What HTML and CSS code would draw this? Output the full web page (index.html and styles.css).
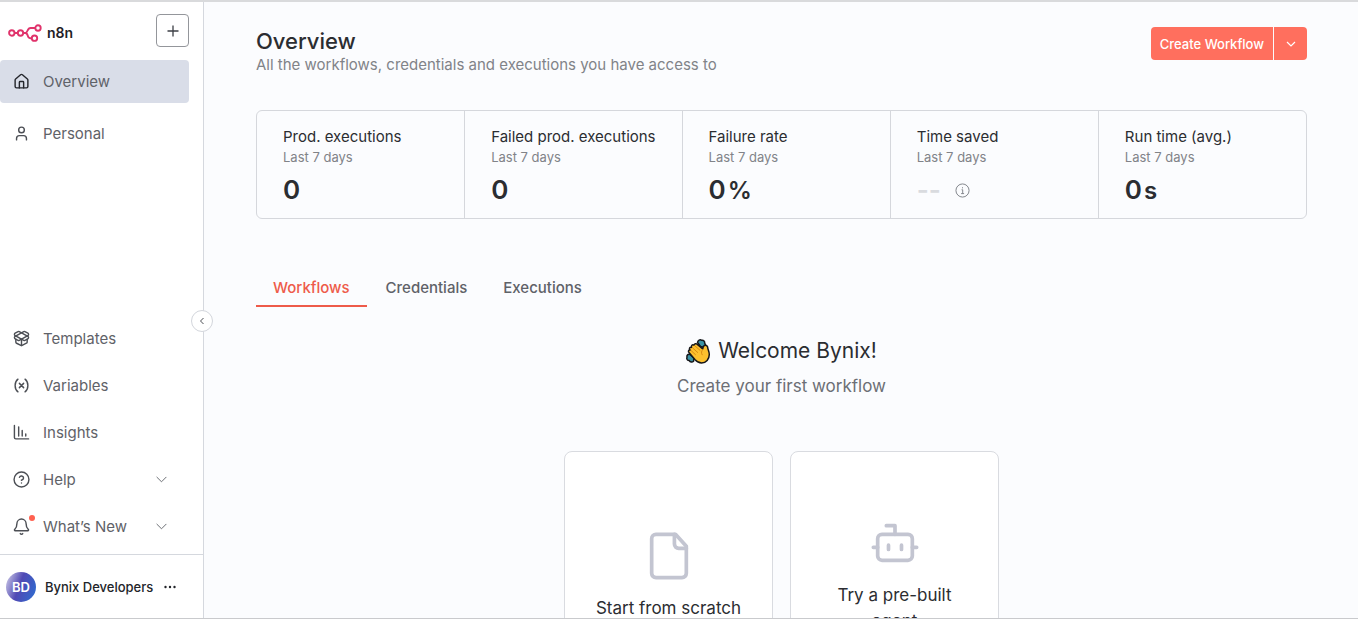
FILE: index.html
```html
<!DOCTYPE html>
<html lang="en">
<head>
  <meta charset="UTF-8">
  <meta name="viewport" content="width=device-width, initial-scale=1.0">
  <title>Overview - n8n</title>
  <link rel="stylesheet" href="styles.css">
</head>
<body>
  <div class="app">
    <aside class="sidebar">
      <div class="sidebar-header">
        <a class="logo" href="#">
          <svg class="logo-mark" viewBox="0 0 34 18" fill="none" stroke="#e0336b" stroke-width="1.9">
            <circle cx="3.800" cy="9" r="2.700"/>
            <circle cx="12.500" cy="9" r="2.700"/>
            <circle cx="30" cy="4" r="2.700"/>
            <circle cx="26.500" cy="14.200" r="2.700"/>
            <path d="M6.500 9h3.300M15.200 9h2c3 0 1.500-5 5.500-5h4.600M17.200 9c3.500 0 1.500 5.200 5 5.200h1.600"/>
          </svg>
          <span>n8n</span>
        </a>
        <button class="add-button" type="button" aria-label="Add">
          <svg class="icon-plus" viewBox="0 0 14 14" fill="none" stroke="currentColor" stroke-width="1.3"><path d="M7 1.500v11M1.500 7h11"/></svg>
        </button>
      </div>

      <nav class="menu">
        <a class="menu-item active" href="#">
          <svg class="icon" viewBox="0 0 24 24"><path d="M15 21v-8a1 1 0 0 0-1-1h-4a1 1 0 0 0-1 1v8"/><path d="M3 10a2 2 0 0 1 .709-1.528l7-5.999a2 2 0 0 1 2.582 0l7 5.999A2 2 0 0 1 21 10v9a2 2 0 0 1-2 2H5a2 2 0 0 1-2-2z"/></svg>
          <span>Overview</span>
        </a>
        <a class="menu-item" href="#">
          <svg class="icon" viewBox="0 0 24 24"><circle cx="12" cy="7" r="4"/><path d="M19 21v-2a4 4 0 0 0-4-4H9a4 4 0 0 0-4 4v2"/></svg>
          <span>Personal</span>
        </a>
      </nav>

      <nav class="menu menu-bottom">
        <a class="menu-item" href="#">
          <svg class="icon" viewBox="0 0 24 24"><path d="M12 22v-9"/><path d="M15.170 2.210a1.670 1.670 0 0 1 1.630 0L21 4.570a1.930 1.930 0 0 1 0 3.360L8.820 14.790a1.655 1.655 0 0 1-1.640 0L3 12.430a1.930 1.930 0 0 1 0-3.360z"/><path d="M20 13v3.870a2.060 2.060 0 0 1-1.110 1.830l-6 3.080a1.930 1.930 0 0 1-1.780 0l-6-3.080A2.060 2.060 0 0 1 4 16.870V13"/><path d="M21 12.430a1.930 1.930 0 0 0 0-3.360L8.830 2.200a1.640 1.640 0 0 0-1.630 0L3 4.570a1.930 1.930 0 0 0 0 3.360l12.180 6.860a1.636 1.636 0 0 0 1.630 0z"/></svg>
          <span>Templates</span>
        </a>
        <a class="menu-item" href="#">
          <svg class="icon" viewBox="0 0 24 24"><path d="M7 21s-4-3-4-9 4-9 4-9"/><path d="M17 3s4 3 4 9-4 9-4 9"/><path d="m15 9-6 6M9 9l6 6"/></svg>
          <span>Variables</span>
        </a>
        <a class="menu-item" href="#">
          <svg class="icon" viewBox="0 0 24 24"><path d="M2 2v17a2 2 0 0 0 2 2H22"/><path d="M8 17V4M13 17V9M18 17v-3"/></svg>
          <span>Insights</span>
        </a>
        <a class="menu-item" href="#">
          <svg class="icon" viewBox="0 0 24 24"><circle cx="12" cy="12" r="10.500"/><path d="M9.090 9a3 3 0 0 1 5.830 1c0 2-3 3-3 3"/><path d="M12 17h.01"/></svg>
          <span>Help</span>
          <svg class="chevron" viewBox="0 0 12 12"><path d="m1 3.500 5 5 5-5"/></svg>
        </a>
        <a class="menu-item" href="#">
          <span class="icon-wrap">
            <svg class="icon" viewBox="0 0 24 24"><path d="M10.268 22a2 2 0 0 0 3.464 0"/><path d="M2.262 16.326A1 1 0 0 0 3 18h18a1 1 0 0 0 .74-1.673C20.410 14.956 18.500 13.499 18.500 8A6.500 6.500 0 0 0 5.500 8c0 5.499-1.911 6.956-3.238 8.326"/></svg>
            <span class="dot"></span>
          </span>
          <span>What’s New</span>
          <svg class="chevron" viewBox="0 0 12 12"><path d="m1 3.500 5 5 5-5"/></svg>
        </a>
      </nav>

      <div class="user">
        <span class="avatar">BD</span>
        <span class="user-name">Bynix Developers</span>
        <button class="user-menu" type="button" aria-label="User menu">
          <svg viewBox="0 0 14 4" fill="currentColor"><circle cx="2.500" cy="2" r="1.200"/><circle cx="7" cy="2" r="1.200"/><circle cx="11.500" cy="2" r="1.200"/></svg>
        </button>
      </div>

      <button class="collapse" type="button" aria-label="Collapse sidebar">
        <svg viewBox="0 0 8 8" fill="none" stroke="currentColor"><path d="M5.500 1 2.500 4l3 3"/></svg>
      </button>
    </aside>

    <main class="content">
      <header class="page-header">
        <div>
          <h1>Overview</h1>
          <p class="subtitle">All the workflows, credentials and executions you have access to</p>
        </div>
        <div class="button-group">
          <button class="create" type="button">Create Workflow</button>
          <button class="create-more" type="button" aria-label="More create options">
            <svg viewBox="0 0 12 12" fill="none" stroke="currentColor" stroke-width="1.200"><path d="m2 4 4 4 4-4"/></svg>
          </button>
        </div>
      </header>

      <ul class="stats">
        <li>
          <strong>Prod. executions</strong>
          <small>Last 7 days</small>
          <div class="value">0</div>
        </li>
        <li>
          <strong>Failed prod. executions</strong>
          <small>Last 7 days</small>
          <div class="value">0</div>
        </li>
        <li>
          <strong>Failure rate</strong>
          <small>Last 7 days</small>
          <div class="value">0<em>%</em></div>
        </li>
        <li>
          <strong>Time saved</strong>
          <small>Last 7 days</small>
          <div class="value empty">
            <span>--</span>
            <svg class="info" viewBox="0 0 16 16" fill="none" stroke="currentColor"><circle cx="8" cy="8" r="7"/><path d="M7 7.200h1.200v4M6.500 11.300h3.200M8 4.500v1.200"/></svg>
          </div>
        </li>
        <li>
          <strong>Run time (avg.)</strong>
          <small>Last 7 days</small>
          <div class="value">0<em>s</em></div>
        </li>
      </ul>

      <nav class="tabs">
        <a class="tab active" href="#">Workflows</a>
        <a class="tab" href="#">Credentials</a>
        <a class="tab" href="#">Executions</a>
      </nav>

      <section class="welcome">
        <h2>
          <svg class="wave" viewBox="0 0 24 25" stroke="#15161a" stroke-linecap="round" stroke-linejoin="round">
            <path fill="#3b93a5" stroke-width="1.500" d="M11.500 3.500c.3-2.300 2.500-3.300 4.200-2.200 1.900-.4 3.300 1.100 3 2.900 1.200 1.200.9 2.800-.2 4.300l-4-1zM4 15.500c-2-.8-3.600.8-3 2.600-.8 1.900.6 3.600 2.300 3.500.8 1.700 3 2 4.200.700l.500-3.300z"/>
            <path fill="#fcc02e" stroke-width="1.500" d="M3.200 13.800c-1.500-1.300-.5-3.100.9-2.700-1.500-1.600-.2-3.500 1.500-2.700-.9-1.800.8-3.300 2.400-2.300.3-1.600 2.200-1.900 3.300-.8l5.400 4.500c.2-1.600.8-3.300 2.400-3.500 1.700-.2 2.600 1.100 2.700 2.800.1 1.500 1.500 3.200 1.500 6.500 0 4.500-3.200 8.400-7.700 8.400-2.900 0-4.800-1.300-6.500-3.200z"/>
            <path fill="none" stroke="#d98a12" d="m5 11.500 4.500 4.200M6.700 9l5 4.500M9 7l5 4.300M17 10.500c-1.800 1.500-2 3.500-.8 5.300"/>
          </svg>
          <span>Welcome Bynix!</span>
        </h2>
        <p>Create your first workflow</p>
        <div class="cards">
          <a class="card" href="#">
            <svg class="card-icon" viewBox="0 0 24 24"><path d="M15 2H6a2 2 0 0 0-2 2v16a2 2 0 0 0 2 2h12a2 2 0 0 0 2-2V7.500Z"/><path d="M14.500 2v4.500a2 2 0 0 0 2 2H20"/></svg>
            <span>Start from scratch</span>
          </a>
          <a class="card" href="#">
            <svg class="card-icon" viewBox="0 0 24 24"><path d="M12 8V4H8"/><rect width="16" height="12" x="4" y="8" rx="2"/><path d="M2 14h2M20 14h2M15 13v2M9 13v2"/></svg>
            <span>Try a pre-built agent</span>
          </a>
        </div>
      </section>
    </main>
  </div>
</body>
</html>
```
FILE: styles.css
```css
* {
  box-sizing: border-box;
}

body {
  margin: 0;
  font-family: Inter, "Liberation Sans", sans-serif;
  font-size: 15px;
  color: #2b2d31;
  background: #fbfcfe;
}

a {
  color: inherit;
  text-decoration: none;
}

button {
  font: inherit;
  padding: 0;
  cursor: pointer;
}

h1, h2, p, ul {
  margin: 0;
  padding: 0;
}

.app {
  display: flex;
  height: 100vh;
  border-top: 2px solid #d9dadc;
  border-bottom: 1px solid #c9cacd;
}

/* Sidebar */
.sidebar {
  position: relative;
  display: flex;
  flex-direction: column;
  flex: 0 0 204px;
  background: #fff;
  border-right: 1px solid #d5d8de;
}

.sidebar-header {
  display: flex;
  align-items: center;
  justify-content: space-between;
  padding: 12px 14px 13px 8px;
}

.logo {
  display: flex;
  align-items: center;
  gap: 5px;
  margin-top: 4px;
  font-size: 14px;
  font-weight: 600;
  color: #1f2126;
}

.logo-mark {
  width: 34px;
  height: 18px;
}

.add-button {
  display: flex;
  align-items: center;
  justify-content: center;
  width: 33px;
  height: 33px;
  color: #3c3f45;
  background: #fff;
  border: 1px solid #94969b;
  border-radius: 4px;
}

.icon-plus {
  width: 14px;
  height: 14px;
}

.menu {
  display: flex;
  flex-direction: column;
  gap: 9px;
  padding-right: 14px;
}

.menu-bottom {
  gap: 4px;
  margin-top: auto;
  padding-bottom: 6px;
}

.menu-item {
  display: flex;
  align-items: center;
  height: 43px;
  gap: 13px;
  padding: 0 22px 0 13px;
  border-radius: 4px;
  font-size: 15px;
  color: #5f6268;
}

.menu-item.active {
  background: #d9dde8;
}

.menu-item.active .icon {
  color: #24262c;
}

.icon,
.chevron,
.card-icon {
  fill: none;
  stroke: currentColor;
  stroke-width: 2;
  stroke-linecap: round;
  stroke-linejoin: round;
}

.icon {
  display: block;
  width: 17px;
  height: 17px;
  color: #4c4f55;
  overflow: visible;
}

.icon-wrap {
  position: relative;
}

.dot {
  position: absolute;
  top: -3px;
  right: -5px;
  width: 6px;
  height: 6px;
  border-radius: 50%;
  background: #ff6150;
}

.chevron {
  width: 11px;
  height: 11px;
  margin-left: auto;
  stroke-width: 1;
}

.user {
  display: flex;
  align-items: center;
  height: 64px;
  padding: 0 6px;
  border-top: 1px solid #d5d8de;
}

.avatar {
  width: 30px;
  height: 30px;
  border-radius: 50%;
  background: linear-gradient(110deg, #d5d2ea, #5049b4 45%, #2b6fd2);
  color: #fff;
  font-size: 13px;
  font-weight: 600;
  line-height: 30px;
  text-align: center;
}

.user-name {
  margin-left: 9px;
  font-size: 13px;
  font-weight: 500;
  color: #222429;
}

.user-menu {
  display: flex;
  margin-left: 10px;
  border: 0;
  background: none;
  color: #222429;
}

.user-menu svg {
  width: 14px;
  height: 4px;
}

.collapse {
  position: absolute;
  top: 308px;
  right: -10px;
  display: flex;
  align-items: center;
  justify-content: center;
  width: 22px;
  height: 22px;
  color: #4c4f55;
  background: #fff;
  border: 1px solid #d3d6dc;
  border-radius: 50%;
}

.collapse svg {
  width: 8px;
  height: 8px;
}

/* Main content */
.content {
  flex: 1;
  min-width: 0;
  padding: 25px 51px 40px 52px;
  overflow-y: auto;
  scrollbar-width: none;
}

.page-header {
  display: flex;
  align-items: flex-start;
  justify-content: space-between;
}

h1 {
  font-size: 22px;
  font-weight: 500;
  line-height: 28px;
}

.subtitle {
  font-size: 15px;
  line-height: 20px;
  color: #818388;
}

.button-group {
  display: flex;
  gap: 1px;
}

.create,
.create-more {
  height: 33px;
  color: #fff;
  background: #ff6f5e;
  border: 0;
}

.create {
  padding: 0 9px;
  border-radius: 4px 0 0 4px;
  font-size: 13px;
  font-weight: 500;
}

.create-more {
  display: flex;
  align-items: center;
  justify-content: center;
  width: 33px;
  border-radius: 0 4px 4px 0;
}

.create-more svg {
  width: 12px;
  height: 12px;
}

.stats {
  display: flex;
  margin-top: 35px;
  border: 1px solid #d5d7dc;
  border-radius: 6px;
  list-style: none;
}

.stats li {
  flex: 1 0 0;
  padding: 15px 26px 12px;
  white-space: nowrap;
}

.stats li + li {
  border-left: 1px solid #d5d7dc;
}

.stats strong {
  display: block;
  font-size: 15px;
  font-weight: 400;
  line-height: 21px;
}

.stats small {
  display: block;
  font-size: 13px;
  line-height: 20px;
  color: #818388;
}

.value {
  display: flex;
  align-items: baseline;
  gap: 2px;
  height: 39px;
  font-size: 26px;
  font-weight: 600;
  line-height: 46px;
}

.value em {
  font-size: 24px;
  font-style: normal;
}

.value.empty {
  align-items: center;
  gap: 14px;
  height: 46px;
  margin-bottom: -7px;
  color: #d9dbdf;
}

.info {
  width: 15px;
  height: 15px;
  color: #7d8086;
}

.tabs {
  display: flex;
  gap: 2px;
  margin-top: 51px;
}

.tab {
  padding: 0 17px;
  border-bottom: 2px solid transparent;
  font-size: 15px;
  font-weight: 500;
  line-height: 35px;
  color: #5f6268;
}

.tab.active {
  color: #ee5b4a;
  border-color: #ee5b4a;
}

.welcome {
  padding-top: 30px;
  text-align: center;
}

h2 {
  display: flex;
  align-items: center;
  justify-content: center;
  gap: 8px;
  font-size: 21px;
  font-weight: 400;
  line-height: 28px;
}

.wave {
  width: 24px;
  height: 25px;
  overflow: visible;
}

.welcome p {
  margin-top: 8px;
  font-size: 17px;
  line-height: 26px;
  color: #6c6f75;
}

.cards {
  display: flex;
  justify-content: center;
  gap: 17px;
  margin-top: 52px;
}

.card {
  display: flex;
  flex-direction: column;
  align-items: center;
  justify-content: center;
  gap: 13px;
  width: 209px;
  min-height: 248px;
  padding: 0 26px;
  background: #fff;
  border: 1px solid #d9dbe0;
  border-radius: 8px;
  font-size: 17px;
  line-height: 26px;
}

.card-icon {
  width: 52px;
  height: 52px;
  color: #c3c5d1;
  stroke-width: 1.7;
}
```
